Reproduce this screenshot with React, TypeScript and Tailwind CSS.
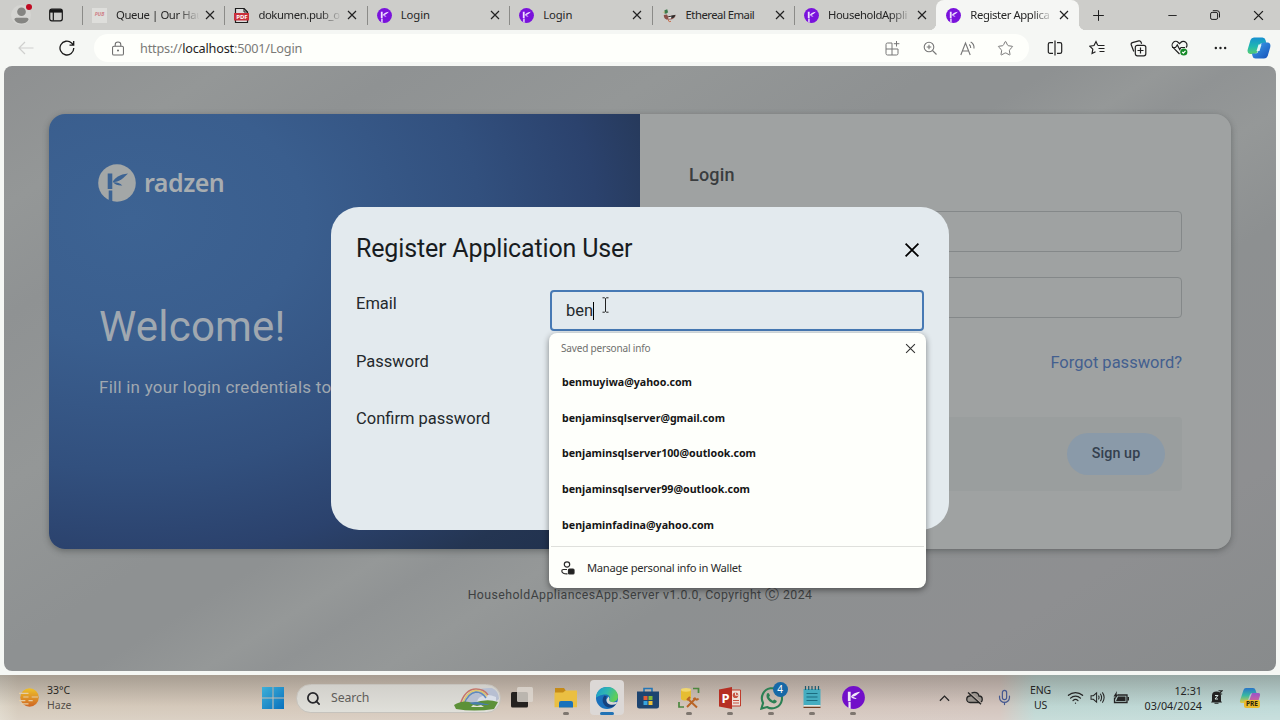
import React from 'react';
import { Mic, Minus, Plus, Search, Star, Wifi } from 'lucide-react';

interface Tab {
  title: string;
  icon: 'pub' | 'pdf' | 'radzen' | 'duck';
  active?: boolean;
}

const tabs: Tab[] = [
  { title: 'Queue | Our Hau', icon: 'pub' },
  { title: 'dokumen.pub_o', icon: 'pdf' },
  { title: 'Login', icon: 'radzen' },
  { title: 'Login', icon: 'radzen' },
  { title: 'Ethereal Email', icon: 'duck' },
  { title: 'HouseholdAppli', icon: 'radzen' },
  { title: 'Register Applica', icon: 'radzen', active: true },
];

const suggestions = [
  { email: 'benmuyiwa@yahoo.com', width: 'w-[130px]' },
  { email: 'benjaminsqlserver@gmail.com', width: 'w-[163px]' },
  { email: 'benjaminsqlserver100@outlook.com', width: 'w-[194px]' },
  { email: 'benjaminsqlserver99@outlook.com', width: 'w-[188px]' },
  { email: 'benjaminfadina@yahoo.com', width: 'w-[152px]' },
];

const RadzenMark: React.FC<{ className: string; disc: string; glyph: string }> = ({ className, disc, glyph }) => (
  <svg viewBox="0 0 38 38" className={className}>
    <circle cx="19" cy="19" r="18.8" fill={disc} />
    <g fill={glyph}>
      <path d="M9.7 9.5h4.6v15.6H9.7zM10.7 26.4h3.6v11l-3.6-1.2z" />
      <path d="M14.500 18.300c2.500-4.800 7-7.800 15.500-8.800-3.500 3.500-5.500 5.500-8.500 7-2.200 1-4.500 1.500-7 1.800z" />
      <path d="M15 18.300c3.500-.4 6.500.4 9.300 3.200-3.800.3-6.800-.6-9.300-3.200z" />
    </g>
  </svg>
);

const Cross: React.FC<{ className: string; stroke?: number }> = ({ className, stroke = 1.2 }) => (
  <svg viewBox="0 0 10 10" className={className} fill="none" stroke="currentColor" strokeWidth={stroke}>
    <path d="M1 1l8 8M9 1L1 9" />
  </svg>
);

const TabIcon: React.FC<{ icon: Tab['icon'] }> = ({ icon }) => {
  if (icon === 'pub') {
    return (
      <span className="flex size-[15px] items-center justify-center bg-[#dededb] text-[5px] font-bold italic text-[#cf8289]">
        PUB
      </span>
    );
  }
  if (icon === 'pdf') {
    return (
      <span className="relative flex size-[15px] items-center justify-center">
        <svg viewBox="0 0 15 15" className="absolute inset-0">
          <path d="M1.500.5h8.500l3.500 3.500v10.500h-12z" fill="#dcdcdc" stroke="#1d1d1d" strokeWidth="1.200" />
          <path d="M10 .5v3.500h3.500" fill="none" stroke="#1d1d1d" />
          <path d="M0 5h15v7.500H0z" fill="#c9303b" />
        </svg>
        <span className="relative mt-[3px] text-[6px] leading-none font-bold text-white">PDF</span>
      </span>
    );
  }
  if (icon === 'duck') {
    return (
      <svg viewBox="0 0 15 15" className="size-[15px]">
        <path d="M1.800 7c0 4 2.500 5 6 4.600 3.500-.2 5-1.800 6-4.400l-3.500.4-4.300 1-1-2z" fill="#8b5149" />
        <path d="M6 8.500l7.500-1.700-1.500 2.700-3 .8z" fill="#2a2c2c" />
        <path d="M6 9.500l3.500-.9-.5 1.900-2.500.2z" fill="#eee" />
        <path d="M2.500 2.300l2.700-1 .9 2.900-2 1.600-1.600-.4z" fill="#3c7a4b" />
        <path d="M.5 4.200l2-.8.5 1z" fill="#d5ba5b" />
        <path d="M6 11.500l1.200 2.200 1.800-.4" fill="none" stroke="#c86d4c" />
      </svg>
    );
  }
  return <RadzenMark className="size-[15px]" disc="#7a12dc" glyph="#f0e2ff" />;
};

const TabStrip = () => (
  <div className="flex h-[30px] shrink-0 items-center bg-[#cdcdca]">
    <div className="flex w-[82px] items-center">
      <div className="relative ml-[11px] flex size-5 items-center justify-center rounded-full bg-[#d5d5d2]">
        <svg viewBox="0 0 18 18" className="mt-px size-[17px]" fill="#858582">
          <circle cx="9" cy="5" r="4.600" />
          <path d="M1.500 13.500q0-2 2-2h11q2 0 2 2c-1.500 3-4.500 4-7.500 4s-6-1-7.500-4z" />
        </svg>
        <span className="absolute -top-[1px] left-[15px] size-1.5 rounded-full bg-[#c00a22]" />
      </div>
      <svg viewBox="0 0 14 14" className="ml-[18px] size-[14px]" fill="none" stroke="#161616">
        <rect x=".7" y="1.200" width="12.600" height="11.600" rx="2" strokeWidth="1.200" />
        <path d="M1 3h12" strokeWidth="3.200" />
        <path d="M4.300 3v9.500" strokeWidth="1.200" />
      </svg>
    </div>
    {tabs.map((tab, index) => (
      <div
        key={index}
        className={`relative flex h-[30px] w-[142.4px] items-center ${tab.active ? 'rounded-t-lg bg-[#f5f6f4]' : ''}`}
      >
        {!tab.active && <span className="h-[19px] w-px bg-[#8b8b88]" />}
        {tab.active && (
          <>
            <span className="absolute bottom-0 -left-[7px] size-[7px] bg-[radial-gradient(circle_at_0_0,#cdcdca_7px,#f5f6f4_7.500px)]" />
            <span className="absolute -right-[7px] bottom-0 size-[7px] bg-[radial-gradient(circle_at_100%_0,#cdcdca_7px,#f5f6f4_7.500px)]" />
          </>
        )}
        <span className={tab.active ? 'ml-[10px]' : 'ml-[9px]'}>
          <TabIcon icon={tab.icon} />
        </span>
        <span
          className={`ml-[9px] h-4 w-[83px] text-[11.3px] leading-4 whitespace-nowrap text-[#262626] ${
            tab.title === 'Login'
              ? 'tracking-[-0.1px]'
              : tab.icon === 'duck'
                ? 'tracking-[-0.5px]'
                : 'tracking-[-0.4px] [mask-image:linear-gradient(to_right,black_62px,transparent_84px)]'
          }`}
        >
          {tab.title}
        </span>
        <Cross className="ml-[6px] size-[10px] text-[#222]" />
      </div>
    ))}
    <div className="ml-[11px] flex flex-1 items-center text-[#1c1c1c]">
      <Plus className="size-[17px]" strokeWidth={1.4} />
      <Minus className="ml-[59px] size-[13px]" strokeWidth={1.7} />
      <svg viewBox="0 0 10 10" className="ml-[31px] size-[10px]" fill="none" stroke="currentColor">
        <rect x=".6" y="2.400" width="7" height="7" rx="1.500" />
        <path d="M2.800.7h4.200a2.500 2.500 0 012.500 2.500v4.300" />
      </svg>
      <Cross className="ml-[33px] size-[11px]" />
    </div>
  </div>
);

const Toolbar = () => (
  <div className="flex h-9 shrink-0 items-center bg-[#f5f7f4]">
    <svg viewBox="0 0 16 16" className="ml-[18px] size-4" fill="none" stroke="#cfd0ce" strokeWidth="1.200">
      <path d="M15.500 8H1M7 2L1 8l6 6" />
    </svg>
    <svg viewBox="0 0 16 16" className="ml-[25px] size-4" fill="none" stroke="#1a1a1a" strokeWidth="1.300">
      <path d="M14.800 8A6.900 6.900 0 1112.600 3L14.500 5M14.700 1v4.200h-4.200" />
    </svg>
    <div className="ml-[19px] flex h-7 w-[935px] items-center rounded-full bg-[#fefffb] pr-[15px] pl-[17px] text-[#777]">
      <svg viewBox="0 0 14 16" className="h-[15px] w-[14px]" fill="none" stroke="#6b6b6b" strokeWidth="1.100">
        <rect x="1.200" y="5.500" width="11.600" height="9.500" rx="1.500" />
        <path d="M4 5.500V4a3 3 0 016 0v1.500" />
        <circle cx="7" cy="10.200" r=".5" fill="#444" />
      </svg>
      <span className="mt-px ml-[15px] text-[12.7px] tracking-[-0.2px] text-[#7a7a78]">
        https://<span className="text-[#1e1e1e]">localhost</span>:5001/Login
      </span>
      <div className="ml-auto flex items-center">
        <svg viewBox="0 0 15 15" className="size-[15px]" fill="none" stroke="currentColor">
          <path d="M7 2H2.500a1.500 1.500 0 00-1.500 1.500v9A1.500 1.500 0 002.500 14h9a1.500 1.500 0 001.500-1.500V8H1M7 2v12M11.500 0v5.500M8.800 2.700h5.600" />
        </svg>
        <svg viewBox="0 0 14 14" className="ml-[23px] size-[14px]" fill="none" stroke="currentColor" strokeWidth="1.100">
          <circle cx="6" cy="6" r="4.800" />
          <path d="M9.500 9.500l4 4M6 3.700v4.600M3.700 6h4.600" />
        </svg>
        <svg viewBox="0 0 16 15" className="ml-[23px] h-[15px] w-4" fill="none" stroke="currentColor" strokeWidth="1.100">
          <path d="M.8 14L5.500 2l4.700 12M2.400 10h6.200M9.200 3.500q1.600 1.300 1.500 3.500M10.700 1q3.700 2 3.300 6.500" />
        </svg>
        <Star className="ml-[21px] size-[17px]" strokeWidth={1.4} />
      </div>
    </div>
    <div className="ml-[18px] flex items-center text-[#202020]">
      <svg viewBox="0 0 16 16" className="size-4" fill="none" stroke="currentColor" strokeWidth="1.200">
        <path d="M6 2.600H3a1.700 1.700 0 00-1.700 1.700v7.400A1.700 1.700 0 003 13.400h3M10 2.600h3a1.700 1.700 0 011.700 1.700v7.400a1.700 1.700 0 01-1.700 1.700h-3M8 .5v15" />
      </svg>
      <svg viewBox="0 0 16 16" className="ml-[26px] size-4" fill="none" stroke="currentColor" strokeWidth="1.200">
        <path d="M8.800 5.400L7 1.600 5 5.500l-4.200.7 3 3-.7 4.300 3.400-1.800M9 5.500h6.500M9.500 8.500h6M10.500 11.500h5" />
      </svg>
      <svg viewBox="0 0 17 17" className="ml-[25px] size-[17px]" fill="none" stroke="currentColor" strokeWidth="1.200">
        <path d="M3.800 11.500L1.300 5a1.900 1.900 0 011-2.400L8.800.9A1.900 1.900 0 0111 2l.6 1.700" />
        <rect x="5.300" y="5.300" width="10.500" height="10.500" rx="2" />
        <path d="M10.500 7.500v6M7.500 10.500h6" />
      </svg>
      <svg viewBox="0 0 17 17" className="ml-[24px] size-[17px]" fill="none" stroke="currentColor" strokeWidth="1.200">
        <path d="M8.500 14L2.200 7.700A3.600 3.600 0 017.300 2.500l1.200 1.200 1.200-1.200A3.600 3.600 0 0115 7.500M1 7.500h3.500L6.300 5l2.400 4.500L10 7.500h4" />
        <circle cx="12.800" cy="12" r="3.600" fill="#168a28" stroke="none" />
        <path d="M11.200 12l1.200 1.200 2.100-2.300" stroke="white" />
      </svg>
      <svg viewBox="0 0 14 4" className="ml-[26px] h-1 w-[13px]" fill="currentColor">
        <circle cx="2" cy="2" r="1.300" />
        <circle cx="7" cy="2" r="1.300" />
        <circle cx="12" cy="2" r="1.300" />
      </svg>
      <svg viewBox="0 0 24 22" className="ml-[20px] h-[22px] w-6">
        <defs>
          <linearGradient id="copA" x1="0" y1="0" x2="0" y2="1">
            <stop offset="0" stopColor="#1690d0" />
            <stop offset=".55" stopColor="#20b8b0" />
            <stop offset="1" stopColor="#58cd72" />
          </linearGradient>
          <linearGradient id="copB" x1="0" y1="0" x2="1" y2="1">
            <stop offset="0" stopColor="#3ea4ee" />
            <stop offset="1" stopColor="#1650b8" />
          </linearGradient>
        </defs>
        <path d="M7 .5h8.500q2.500 0 3 2.500l.8 3h-4q-2.300 0-3 2.500l-2 6.500q-.7 2-2.800 2H3Q-.2 16 .7 12.500L3.500 3Q4.300.5 7 .5z" fill="url(#copA)" />
        <path d="M17 21.500H8.500q-2.500 0-3-2.500l-.6-2.500h3.500q2.300 0 3-2.500l2-6q.7-2.500 3.100-2.500H21q3 .5 2.300 4.500l-2.600 9Q19.500 21.500 17 21.500z" fill="url(#copB)" />
        <path d="M11.500 7.500h3L12.500 14h-3z" fill="#e5f6f5" />
      </svg>
    </div>
  </div>
);

const LoginCard = () => (
  <div className="mx-[45px] mt-12 flex h-[435px] overflow-hidden rounded-2xl font-[Roboto,sans-serif] shadow-[0_2px_6px_rgba(50,55,55,0.45)]">
    <div className="w-[591px] bg-[radial-gradient(ellipse_580px_420px_at_14%_24%,#3d6393_0%,#3a5e8e_30%,#32507e_60%,#2b426d_80%,#243552_97%,#1e2e4a_120%)] px-[50px] pt-[49px] text-[#a0a8b0]">
      <div className="-ml-px flex items-center">
        <RadzenMark className="mt-px size-[38px]" disc="#a3a7a7" glyph="#3c6393" />
        <span className="-mt-px ml-[8px] font-['Noto_Sans',sans-serif] text-[25px] leading-[38px] font-semibold tracking-[-0.5px] text-[#a8adb0]">
          radzen
        </span>
      </div>
      <h1 className="mt-[97px] text-[42px] leading-[56px] font-normal tracking-[0.2px]">Welcome!</h1>
      <p className="mt-[20px] text-[17px] leading-6 tracking-[0.24px] whitespace-nowrap">
        Fill in your login credentials to proceed.
      </p>
    </div>
    <div className="flex flex-1 flex-col bg-[#9fa2a2] px-[49px] pt-[49px]">
      <h2 className="text-[18px] leading-6 font-medium tracking-[0.2px] text-[#3a3d3f]">Login</h2>
      <div className="mt-[24px] h-[41px] shrink-0 rounded border border-[#848889]" />
      <div className="mt-[25px] h-[41px] shrink-0 rounded border border-[#848889]" />
      <a className="mt-[33px] text-right text-[16.5px] leading-6 text-[#435f8f]">Forgot password?</a>
      <div className="mt-[42px] flex h-[74px] shrink-0 items-center justify-end rounded bg-[#9a9e9e] pr-[17px]">
        <button className="h-[42px] w-[98px] rounded-full bg-[#8a9aa9] text-[14.3px] font-medium tracking-[0.1px] text-[#34404e]">
          Sign up
        </button>
      </div>
    </div>
  </div>
);

const AutofillMenu = () => (
  <div className="absolute top-[333px] left-[549px] h-[255px] w-[377px] rounded-lg bg-[#fefffb] shadow-[0_2px_6px_rgba(0,0,0,0.45)]">
    <div className="flex h-[31.500px] items-center justify-between pr-[10px] pl-[12px]">
      <span className="text-[10px] tracking-[-0.17px] text-[#70706e]">Saved personal info</span>
      <Cross className="size-[11px] text-[#333]" stroke={1} />
    </div>
    <ul>
      {suggestions.map((item) => (
        <li key={item.email} className="flex h-[35.6px] items-center pl-[13px] text-[11.2px] font-bold text-[#151515]">
          <svg height="18" className={`${item.width} overflow-visible`}>
            <text x="0" y="13" textLength="100%" lengthAdjust="spacingAndGlyphs" fill="currentColor">
              {item.email}
            </text>
          </svg>
        </li>
      ))}
    </ul>
    <div className="mx-[2px] mt-[3.500px] flex h-[43px] items-center border-t border-[#dfe0dc] pl-[10px]">
      <svg viewBox="0 0 14 14" className="size-[14px]" fill="none" stroke="#2a2a2a" strokeWidth="1.200">
        <circle cx="6" cy="3.500" r="2.700" />
        <path d="M6.500 12.800C3 13 .8 12 .8 10q0-1.500 1.500-1.500H6" />
        <rect x="7.500" y="8" width="5.500" height="5" rx="1" fill="#222" />
      </svg>
      <span className="ml-[12px] text-[11.2px] tracking-[-0.29px] text-[#2b2b2b]">Manage personal info in Wallet</span>
    </div>
  </div>
);

const RegisterDialog = () => (
  <div className="absolute top-[207px] left-[331px] h-[323px] w-[618px] rounded-[28px] bg-[#e3eaee] px-[25px] pt-[26px] font-[Roboto,sans-serif] text-[#24292c]">
    <div className="flex h-8 items-center justify-between">
      <h2 className="text-[25px] font-normal tracking-[-0.16px] text-[#181c1f]">Register Application User</h2>
      <Cross className="mt-[2px] mr-[4px] size-[16px] text-black" stroke={1.1} />
    </div>
    <div className="mt-[25px] flex text-[16.500px]">
      <div className="w-[195px]">
        <div className="h-[57.500px] leading-[28px]">Email</div>
        <div className="h-[57.500px] leading-[28px]">Password</div>
        <div className="leading-[28px]">Confirm password</div>
      </div>
      <div className="flex h-[41px] w-[374px] shrink-0 items-center rounded border-2 border-[#4779b4] pl-[14px]">
        <span className="pt-[2px]">ben</span>
        <span className="h-[18px] w-px bg-black" />
      </div>
    </div>
    <svg viewBox="0 0 7 16" className="absolute top-[90px] left-[271px] h-4 w-[7px]" fill="none" stroke="#222">
      <path d="M.5.8h2l1 .7 1-.7h2M3.500 1.500v13M.5 15.200h2l1-.7 1 .7h2" />
    </svg>
  </div>
);

const TaskButton: React.FC<{ children: React.ReactNode; running?: boolean; active?: boolean }> = ({
  children,
  running,
  active,
}) => (
  <div className="relative flex h-[45px] w-[41.200px] justify-center">
    <div className={`mt-[5px] flex h-[35px] w-[34px] items-start justify-center rounded pt-[7px] ${active ? 'bg-[#dcd8d6]' : ''}`}>
      {children}
    </div>
    {active && <span className="absolute bottom-[5px] h-[3px] w-[14px] rounded-full bg-[#2273b5]" />}
    {running && <span className="absolute bottom-[5px] h-[3px] w-[6px] rounded-full bg-[#7e766f]" />}
  </div>
);

const Taskbar = () => (
  <div className="flex h-[45px] shrink-0 items-center bg-[linear-gradient(to_bottom,rgba(60,55,50,0.30),rgba(255,255,255,0)_70%,rgba(255,255,255,0.15)),linear-gradient(to_right,#ded7c9_0px,#d5cabb_18px,#d5c7ba_500px,#d3c5be_1000px,#bed7d3_1035px,#bfdad8_1280px)]">
    <svg viewBox="0 0 20 20" className="ml-[18px] size-[21px]">
      <defs>
        <linearGradient id="sun" x1="0" y1="0" x2="0" y2="1">
          <stop offset="0" stopColor="#eec12b" />
          <stop offset="1" stopColor="#cf6522" />
        </linearGradient>
      </defs>
      <circle cx="11" cy="10" r="8.800" fill="url(#sun)" />
      <path d="M1 6h9M5 9.500h5M13 9.500h6M1 13h6M10 13h4M3 16h7" stroke="#e4cda6" strokeWidth="1.100" />
    </svg>
    <div className="ml-[8px] w-[206px] text-[10.500px] leading-[15px]">
      <p className="text-[#292623]">33°C</p>
      <p className="text-[#56504a]">Haze</p>
    </div>
    <svg viewBox="0 0 22 22" className="mt-px ml-[9px] size-[22px]">
      <defs>
        <linearGradient id="win" x1="0" y1="0" x2="1" y2="1">
          <stop offset="0" stopColor="#3eb0d8" />
          <stop offset="1" stopColor="#0870bd" />
        </linearGradient>
      </defs>
      <path d="M0 0h10.500v10.500H0zM11.500 0H22v10.500H11.500zM0 11.500h10.500V22H0zM11.500 11.500H22V22H11.500z" fill="url(#win)" />
    </svg>
    <div className="mt-px ml-[12px] flex h-[29px] w-[205px] items-center overflow-hidden rounded-full border border-[#c6c3bd] bg-linear-to-b from-[#d2d0cb] to-[#e0e0da] pl-[9px]">
      <Search className="size-[15px] text-[#26262a]" strokeWidth={2.8} />
      <span className="ml-[10px] text-[12.300px] tracking-[-0.1px] text-[#5f5d5a]">Search</span>
      <svg viewBox="0 0 46 26" className="ml-auto h-[26px] w-[46px]">
        <path d="M14 10q9-8 24-7 7 3 7 11L34 22H10z" fill="#b7bfd2" />
        <path d="M24 14q7-7 18-2v8H22z" fill="#dadfe9" />
        <path d="M6 20Q11 4 22 4q8 0 12 6" fill="none" stroke="#c5756b" strokeWidth="1.500" />
        <path d="M8 20Q13 6 22 5.500q7 0 11 6" fill="none" stroke="#dfc66c" strokeWidth="1.300" />
        <path d="M9.500 20Q14 8 22 7q6 0 10 6" fill="none" stroke="#608abd" strokeWidth="1.500" />
        <path d="M0 20q9-6 19-2 14-5 25-1l-4 7q-20 3-38 0z" fill="#5d9138" />
        <path d="M15 18q7-2 13 0t10 0l-5 2-14-.5z" fill="#497dae" />
        <path d="M17 22l2-2 4 1 4-1 3 2z" fill="#e3e4d9" />
      </svg>
    </div>
    <div className="flex w-[373px]">
      <TaskButton>
        <svg viewBox="0 0 22 22" className="size-[22px]">
          <rect x="0" y="5" width="17" height="15.500" rx="1.500" fill="#24211f" />
          <rect x="6" y="0" width="16" height="15" rx="1.500" fill="#ddd7d0" opacity=".82" />
        </svg>
      </TaskButton>
      <div className="w-[3px] shrink-0" />
      <TaskButton running>
        <svg viewBox="0 0 24 22" className="h-[22px] w-6">
          <path d="M1 1h9l2 3h10.500v16H1z" fill="#c58b18" />
          <path d="M.5 5.500H9l2.500-2H23v16.800H.5z" fill="#eabf42" />
          <path d="M5 20.500V16q0-2 2-2h10q2 0 2 2v4.500z" fill="#1872bb" />
        </svg>
      </TaskButton>
      <TaskButton active>
        <svg viewBox="0 0 24 24" className="-mt-px size-6">
          <defs>
            <linearGradient id="edgeA" x1="0" y1="0" x2="1" y2=".4">
              <stop offset="0" stopColor="#1997d2" />
              <stop offset=".55" stopColor="#31b8ae" />
              <stop offset="1" stopColor="#60ce58" />
            </linearGradient>
          </defs>
          <circle cx="12" cy="12" r="11" fill="#1a70bc" />
          <path d="M1 11.500C1.500 5 6 1 12 1c7 0 11 5 11 9.500 0 4-3 5.500-6 5.500-2.800 0-3.900-1-2.800-2.200 1.600-2.600 0-5.300-3.700-5.300-5 0-8 2.400-9.500 3z" fill="url(#edgeA)" />
          <path d="M9.500 9.500c-3 3-2.500 9 2.500 11.500 4 1.500 7.500-.5 9-3-6 1.800-10-.5-10-4.500q0-2 1-3z" fill="#17427e" />
          <path d="M13.500 10.500q1.500 1.600.5 3.500 1 3 7 2l1 .3-.8 1.700c-5 2-10 0-9.700-4.500z" fill="#dcd8d6" />
        </svg>
      </TaskButton>
      <TaskButton>
        <svg viewBox="0 0 22 22" className="size-[22px]">
          <path d="M7 5V1.500h8V5" fill="none" stroke="#2476b6" strokeWidth="1.600" />
          <path d="M0 4.500h22V19q0 2.500-2.500 2.500h-17Q0 21.500 0 19z" fill="#1d4470" />
          <path d="M6.500 9H10.500v4H6.500z" fill="#e35c36" />
          <path d="M11.500 9H15.500v4H11.500z" fill="#82ba36" />
          <path d="M6.500 14H10.500v4H6.500z" fill="#38a5df" />
          <path d="M11.500 14H15.500v4H11.500z" fill="#efc13a" />
        </svg>
      </TaskButton>
      <TaskButton running>
        <svg viewBox="0 0 22 22" className="size-[22px]">
          <path d="M3 2.500v9q0 2 5 2t5-2v-9z" fill="#e6bd32" />
          <ellipse cx="8" cy="2.800" rx="5" ry="1.900" fill="#f0d66e" />
          <path d="M15 1.500h5.500V6M1 15v5h5" fill="none" stroke="#4b873f" strokeWidth="1.700" />
          <path d="M9 20l9-9M10 12l9 8.500M15.500 11q3 3 5 .5M9 13l3-3" fill="none" stroke="#b96527" strokeWidth="2" />
        </svg>
      </TaskButton>
      <TaskButton running>
        <span className="relative flex size-[22px] items-center">
          <svg viewBox="0 0 22 22" className="absolute inset-0">
            <path d="M11 3h10.500v16H11z" fill="#eee0d9" stroke="#bf3c2c" />
            <path d="M14 13.500h6M14 16h6" stroke="#c75342" strokeWidth="1.200" />
            <circle cx="16.500" cy="8.300" r="2.800" fill="#c75342" />
            <path d="M16.500 8.300V5.500M16.500 8.300h2.800" stroke="#eee0d9" />
            <path d="M0 2.500L13 0v22L0 19.500z" fill="#b62f23" />
          </svg>
          <span className="relative ml-[2.500px] text-[13px] leading-none font-bold text-white">P</span>
        </span>
      </TaskButton>
      <TaskButton running>
        <span className="relative size-[23px]">
          <svg viewBox="0 0 24 24" className="size-[23px]" fill="none">
            <path d="M1.500 22.500l1.700-5.800A10.500 10.500 0 117.300 20.900z" stroke="#2b8054" strokeWidth="2.200" />
            <path d="M7.200 7q1.500-1.500 2.500.4l.7 1.600-1 1.500q1.400 2.600 4 3.800l1.500-1.200 2.400 1.200q.7 1-.7 2.200-2.600 1.700-6.500-1.300Q5.500 11 7.200 7z" fill="#2b8054" />
          </svg>
          <span className="absolute -top-[5px] left-[13px] flex size-[15px] items-center justify-center rounded-full bg-[#1768a6] text-[10px] text-white">
            4
          </span>
        </span>
      </TaskButton>
      <TaskButton running>
        <svg viewBox="0 0 18 23" className="-mt-px h-[23px] w-[18px]">
          <path d="M.5 3h17v17H.5z" fill="#45adc0" />
          <path d="M.5 20.500h17V22H.5z" fill="#713e21" />
          <path d="M.5 19h17v1.500H.5z" fill="#e4e6df" />
          <path d="M2.500 0v4M5.700 0v4M9 0v4M12.300 0v4M15.500 0v4" stroke="#1d596d" strokeWidth="1.200" />
          <path d="M3.500 7.500h11M3.500 11h11M3.500 14.500h11" stroke="#1b6c80" strokeWidth="1.200" />
        </svg>
      </TaskButton>
      <TaskButton running>
        <RadzenMark className="-mt-px size-[23px]" disc="#720fc9" glyph="#f2e9fa" />
      </TaskButton>
    </div>
    <div className="ml-[65px] flex items-center text-[#252525]">
      <svg viewBox="0 0 12 8" className="h-[8px] w-[11px]" fill="none" stroke="currentColor" strokeWidth="1.400">
        <path d="M1 7l5-5 5 5" />
      </svg>
      <svg viewBox="0 0 17 14" className="ml-[16px] h-[14px] w-[17px]" fill="none" stroke="currentColor" strokeWidth="1.300">
        <path d="M5 11.500H4A3.200 3.200 0 014 5a4.600 4.600 0 019 0 3.200 3.200 0 010 6.500z" fill="#9a948e" />
        <path d="M2.800.8l13 11.700" stroke="#b9aca4" />
        <path d="M2 1.500l13 11.700" />
      </svg>
      <Mic className="ml-[13px] size-[17px] text-[#455990]" strokeWidth={1.7} />
      <div className="ml-[14px] w-[27px] text-center text-[10.500px] leading-[15px] tracking-[-0.1px]">
        <p>ENG</p>
        <p>US</p>
      </div>
      <Wifi className="ml-[13px] size-[17px]" strokeWidth={1.8} />
      <svg viewBox="0 0 17 14" className="ml-[6px] h-[13px] w-[16px]" fill="none" stroke="currentColor" strokeWidth="1.100">
        <path d="M1 5h2.500L7 2v10L3.500 9H1zM9 5q1.300 2 0 4M11 3q2.700 4 0 8M13.200 1.500q3.800 5.500 0 11" />
      </svg>
      <svg viewBox="0 0 16 14" className="ml-[7px] h-[14px] w-4">
        <path d="M5 4h9v7.500H1.500v-5" fill="none" stroke="#252525" strokeWidth="1.300" />
        <path d="M5 5.500h7.500v4.500H3zM14.500 6H16v3.500h-1.500zM4 0L.5 5.500h2L1.500 9l4-5.500H3.500z" fill="#252525" />
      </svg>
      <div className="ml-[13px] w-[60px] text-right text-[10.800px] leading-[15px] whitespace-nowrap">
        <p>12:31</p>
        <p>03/04/2024</p>
      </div>
      <svg viewBox="0 0 13 15" className="ml-[8px] h-[15px] w-[13px]">
        <path d="M2 11V5.500Q2 1.500 6.500 1.500T11 6v5l1 1.500H1z" fill="#222" />
        <path d="M4.500 13.300h4M8.500.7h3.700L8.700 4h3.500" fill="none" stroke="#222" strokeWidth="1.100" />
        <path d="M5 5.500h3L5 9h3" fill="none" stroke="#d6e7e4" />
      </svg>
      <div className="relative mt-px ml-[16px] size-[22px]">
        <svg viewBox="0 0 22 22" className="size-[22px]">
          <defs>
            <linearGradient id="preA" x1="0" y1="0" x2="0" y2="1">
              <stop offset="0" stopColor="#2874c8" />
              <stop offset=".5" stopColor="#38b8a2" />
              <stop offset="1" stopColor="#e2ca42" />
            </linearGradient>
            <linearGradient id="preB" x1="0" y1="0" x2="0" y2="1">
              <stop offset="0" stopColor="#9855cc" />
              <stop offset="1" stopColor="#e76a83" />
            </linearGradient>
          </defs>
          <path d="M7 1h7q2 0 2.500 2l1 3h-4q-2 0-2.700 2l-2 6q-.6 2-2.600 2H2.500Q.5 16 1 13.500L4.500 3Q5 1 7 1z" fill="url(#preA)" />
          <path d="M13 6h6.500q2 0 1.500 2.500L19 15l-2 3H8l2-4z" fill="url(#preB)" />
        </svg>
        <span className="absolute top-[13px] left-[5px] rounded-[2px] bg-[#eabb2c] px-[2px] text-[6.500px] leading-[8px] font-bold text-[#29220b]">
          PRE
        </span>
      </div>
    </div>
  </div>
);

export default function App() {
  return (
    <div className="relative flex h-[720px] w-[1280px] flex-col overflow-hidden bg-[#f5f7f4] font-['Noto_Sans',sans-serif]">
      <TabStrip />
      <Toolbar />
      <main className="mx-1 mb-1 h-[605px] shrink-0 overflow-hidden rounded-lg bg-[linear-gradient(148deg,#8e9091_0%,#949797_10%,#8f9293_18%,#949797_30%,#8e9192_42%,#8e9192_47%,#959898_52%,#909394_55%,#959898_60%,#8d9091_68%,#8e8f91_85%,#888b8c_100%)]">
        <LoginCard />
        <p className="mt-[36px] text-center font-[Roboto,sans-serif] text-[12.3px] leading-5 tracking-[0.43px] text-[#3e4142]">
          HouseholdAppliancesApp.Server v1.0.0, Copyright <span className="text-[14px] leading-none">Ⓒ</span> 2024
        </p>
      </main>
      <Taskbar />
      <RegisterDialog />
      <AutofillMenu />
    </div>
  );
}
